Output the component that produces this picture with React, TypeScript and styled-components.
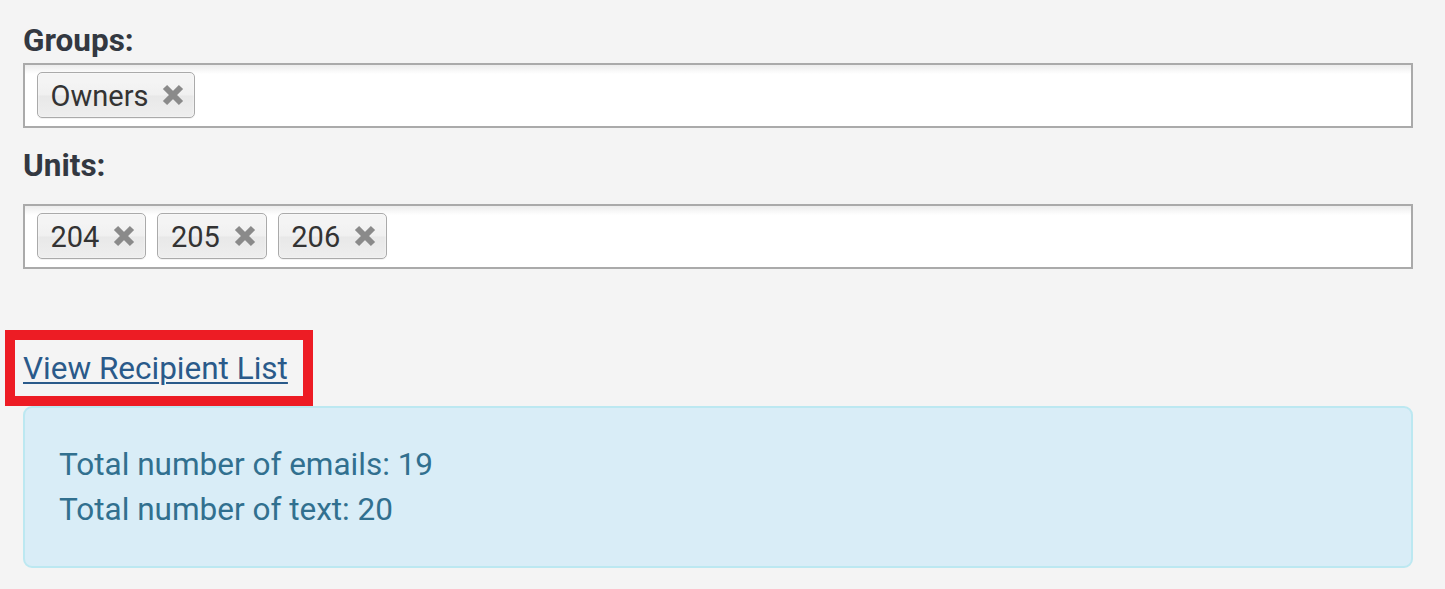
import React from "react";
import styled, { createGlobalStyle } from "styled-components";

const Global = createGlobalStyle`
  html, body { margin: 0; padding: 0; background: #f4f4f4; }
  body { font-family: Roboto, "Liberation Sans", Arial, sans-serif; }
`;

const Page = styled.div`
  padding: 18px 32px 20px 23px;
`;

const Label = styled.label<{ $gap: number }>`
  display: block;
  font-weight: 700;
  font-size: 31.5px;
  line-height: 45px;
  color: #333841;
  margin-bottom: ${(p) => p.$gap}px;
`;

const ChoiceBox = styled.ul`
  list-style: none;
  margin: 0 0 15px;
  padding: 7px 12px 0;
  display: flex;
  gap: 11px;
  border: 2px solid #aaa;
  background: linear-gradient(#eee 1%, #fff 15%);
  height: 65px;
  box-sizing: border-box;
  align-items: flex-start;
`;

const Choice = styled.li`
  display: flex;
  align-items: center;
  height: 46px;
  box-sizing: border-box;
  padding: 2px 10px 0 12.5px;
  border: 1.5px solid #aaa;
  border-radius: 5px;
  background: linear-gradient(#f4f4f4 20%, #f0f0f0 50%, #e8e8e8 52%, #eee 100%);
  box-shadow: 0 0 2px #fff inset, 0 1px 0 rgba(0, 0, 0, 0.05);
  font-size: 29px;
  color: #333;
  gap: 14px;
`;

const Close = styled.svg`
  width: 22px;
  height: 22px;
  display: block;
  margin-top: -2px;
`;

const LinkRow = styled.div`
  margin-top: 77px;
  margin-bottom: 15px;
  line-height: 45px;
`;

const Highlight = styled.span`
  position: relative;
  display: inline-block;
  vertical-align: top;
  &::after {
    content: "";
    position: absolute;
    left: -18px;
    right: -25px;
    top: -16px;
    bottom: -15px;
    border: 10px solid #ed1c24;
    pointer-events: none;
  }
`;

const RecipientLink = styled.a`
  display: block;
  font-size: 31.5px;
  line-height: 45px;
  color: #2a5a8a;
  text-decoration: underline;
  text-underline-offset: 3px;
  text-decoration-thickness: 2px;
`;

const Alert = styled.div`
  background: #d9edf7;
  border: 2.25px solid #bce8f1;
  border-radius: 9px;
  color: #31708f;
  padding: 33.75px 34px 33.75px;
  font-size: 31.5px;
  line-height: 45px;
`;

const Line = styled.div``;

const X = () => (
  <Close viewBox="0 0 22 22">
    <path d="M3 3 L19 19 M19 3 L3 19" stroke="#8a8a8a" strokeWidth="6" strokeLinecap="butt" />
  </Close>
);

const Tags = ({ items }: { items: string[] }) => (
  <ChoiceBox>
    {items.map((t) => (
      <Choice key={t}>
        {t}
        <X />
      </Choice>
    ))}
  </ChoiceBox>
);

export default function App() {
  return (
    <Page>
      <Global />
      <Label $gap={0}>Groups:</Label>
      <Tags items={["Owners"]} />
      <Label $gap={16}>Units:</Label>
      <Tags items={["204", "205", "206"]} />
      <LinkRow>
        <Highlight>
          <RecipientLink href="#">View Recipient List</RecipientLink>
        </Highlight>
      </LinkRow>
      <Alert>
        <Line>Total number of emails: 19</Line>
        <Line>Total number of text: 20</Line>
      </Alert>
    </Page>
  );
}
